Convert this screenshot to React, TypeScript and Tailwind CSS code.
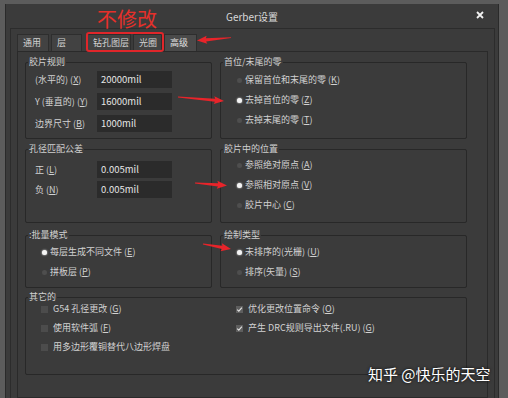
import React from "react";

type Opt = { text: string; key: string; tail?: string };

const Acc = ({ o }: { o: Opt }) => (
  <span className="whitespace-nowrap">
    {o.text} (<span className="underline underline-offset-1">{o.key}</span>){o.tail ?? ""}
  </span>
);

const InputRow = ({ label, value }: { label: Opt; value: string }) => (
  <div className="flex items-center h-[17px]">
    <div className="w-[62px]">
      <Acc o={label} />
    </div>
    <div className="w-[75px] h-[17px] bg-[#2b2b2b] pl-[4px] flex items-center text-[#e6e6e6] text-[9.5px]">
      {value}
    </div>
  </div>
);

const Radio = ({ o, on }: { o: Opt; on?: boolean }) => (
  <div className="flex items-center h-[20px] gap-[3px]">
    {on ? (
      <span className="w-[5px] h-[5px] rounded-full bg-[#f4f4f4] shadow-[0_0_2px_#ffffff]" />
    ) : (
      <span className="w-[5px] h-[5px] rounded-full bg-[#4e4e4e]" />
    )}
    <Acc o={o} />
  </div>
);

const Check = ({ label, on }: { label: React.ReactNode; on?: boolean }) => (
  <div className="flex items-center h-[12px] gap-[5px]">
    <span
      className={
        "w-[7px] h-[7px] flex items-center justify-center " +
        (on ? "bg-[#5e5e5e]" : "bg-[#4c4c4c]")
      }
    >
      {on && (
        <svg width="7" height="7" viewBox="0 0 7 7">
          <path d="M1.2 3.6 L2.8 5.2 L5.9 1.6" stroke="#e4e4e4" strokeWidth="1.1" fill="none" />
        </svg>
      )}
    </span>
    <span className="whitespace-nowrap">{label}</span>
  </div>
);

const Group = ({
  title,
  className,
  children,
}: {
  title: string;
  className: string;
  children: React.ReactNode;
}) => (
  <fieldset className={"border border-[#282828] rounded-[2px] " + className}>
    <legend className="ml-[2px] px-[1px] leading-[12px] text-[#d0d0d0]">{title}</legend>
    {children}
  </fieldset>
);

function arrow(x1: number, y1: number, x2: number, y2: number) {
  const dx = x2 - x1;
  const dy = y2 - y1;
  const len = Math.hypot(dx, dy);
  const ux = dx / len;
  const uy = dy / len;
  const nx = -uy;
  const ny = ux;
  const p = (a: number, b: number) => `${x1 + ux * a + nx * b},${y1 + uy * a + ny * b}`;
  const h = len - 9;
  return [p(0, -0.4), p(h, -1.6), p(h - 1, -4), p(len, 0), p(h - 1, 4), p(h, 1.6), p(0, 0.4)].join(" ");
}

const tabs = [
  { t: "通用", w: "w-[32px]", m: "" },
  { t: "层", w: "w-[31px]", m: "ml-[2px]" },
  { t: "钻孔图层", w: "w-[44px]", m: "ml-[5px]" },
  { t: "光圈", w: "w-[29px]", m: "ml-[2px]" },
  { t: "高级", w: "w-[33px]", m: "ml-[2px]", on: true },
];

export default function App() {
  return (
    <div className="relative w-[508px] h-[398px] overflow-hidden bg-[#5c5c5c] pt-[4px] pl-[5px] font-['Noto_Sans_CJK_SC','Noto_Sans',sans-serif] text-[9px] text-[#d2d2d2]">
      <div className="w-[494px] h-[394px] bg-[#3b3b3b] border-x border-[#2a2a2a] flex flex-col">
        {/* title bar */}
        <div className="relative h-[24px] flex items-center justify-center text-[10px] text-[#dadada]">
          Gerber设置
          <svg className="absolute right-[14px] top-[7px]" width="8" height="8" viewBox="0 0 8 8">
            <path d="M1 1 L7 7 M7 1 L1 7" stroke="#f2f2f2" strokeWidth="1.8" />
          </svg>
        </div>

        <div className="flex-1 ml-[4px] mr-[3px] border-t border-x border-[#2c2c2c] pt-[5px] px-[6px] flex flex-col">
          {/* tabs */}
          <div className="flex h-[17px]">
            {tabs.map((t) => (
              <div
                key={t.t}
                className={
                  "h-[17px] pl-[5px] flex items-center border border-b-0 border-[#2e2e2e] " +
                  t.w +
                  " " +
                  t.m +
                  (t.on ? " bg-[#4a4a4a] text-[#e2e2e2]" : " bg-[#424242]")
                }
              >
                {t.t}
              </div>
            ))}
          </div>

          {/* tab content */}
          <div className="flex-1 border border-[#2a2a2a] pl-[7px] pr-[20px] pt-[4px] flex flex-col">
            <div className="flex gap-[8px]">
              <Group title="胶片规则" className="w-[187px] h-[83px]">
                <div className="pl-[9px] pt-[3px] flex flex-col gap-[5px]">
                  <InputRow label={{ text: "(水平的)", key: "X" }} value="20000mil" />
                  <InputRow label={{ text: "Y (垂直的)", key: "Y" }} value="16000mil" />
                  <InputRow label={{ text: "边界尺寸", key: "B" }} value="1000mil" />
                </div>
              </Group>
              <Group title="首位/末尾的零" className="w-[247px] h-[83px]">
                <div className="pl-[16px] pt-[2px] flex flex-col">
                  <Radio o={{ text: "保留首位和末尾的零", key: "K" }} />
                  <Radio o={{ text: "去掉首位的零", key: "Z" }} on />
                  <Radio o={{ text: "去掉末尾的零", key: "T" }} />
                </div>
              </Group>
            </div>

            <div className="flex gap-[8px] mt-[4px]">
              <Group title="孔径匹配公差" className="w-[187px] h-[80px]">
                <div className="pl-[9px] pt-[6px] flex flex-col gap-[3px]">
                  <InputRow label={{ text: "正", key: "L" }} value="0.005mil" />
                  <InputRow label={{ text: "负", key: "N" }} value="0.005mil" />
                </div>
              </Group>
              <Group title="胶片中的位置" className="w-[247px] h-[80px]">
                <div className="pl-[16px] flex flex-col">
                  <Radio o={{ text: "参照绝对原点", key: "A" }} />
                  <Radio o={{ text: "参照相对原点", key: "V" }} on />
                  <Radio o={{ text: "胶片中心", key: "C" }} />
                </div>
              </Group>
            </div>

            <div className="flex gap-[8px] mt-[6px]">
              <Group title=":批量模式" className="w-[187px] h-[59px]">
                <div className="pl-[16px] pt-[1px] flex flex-col">
                  <Radio o={{ text: "每层生成不同文件", key: "E" }} on />
                  <Radio o={{ text: "拼板层", key: "P" }} />
                </div>
              </Group>
              <Group title="绘制类型" className="w-[247px] h-[59px]">
                <div className="pl-[16px] pt-[1px] flex flex-col">
                  <Radio o={{ text: "未排序的(光栅)", key: "U" }} on />
                  <Radio o={{ text: "排序(矢量)", key: "S" }} />
                </div>
              </Group>
            </div>

            <Group title="其它的" className="w-[442px] h-[84px] mt-[3px]">
              <div className="pl-[15px] grid grid-cols-[195px_1fr]">
                <div className="flex flex-col gap-[7px]">
                  <Check label={<Acc o={{ text: "G54 孔径更改", key: "G" }} />} />
                  <Check label={<Acc o={{ text: "使用软件弧", key: "F" }} />} />
                  <Check label="用多边形覆铜替代八边形焊盘" />
                </div>
                <div className="flex flex-col gap-[7px]">
                  <Check label={<Acc o={{ text: "优化更改位置命令", key: "O" }} />} on />
                  <Check label={<Acc o={{ text: "产生 DRC规则导出文件(.RU)", key: "G" }} />} on />
                </div>
              </div>
            </Group>
          </div>
        </div>
      </div>

      {/* annotations */}
      <div className="absolute left-[97px] top-[6px] text-[20px] leading-[26px] text-[#e5302a] tracking-[0px]">
        不修改
      </div>
      <div className="absolute left-[86px] top-[32px] w-[78px] h-[20px] border-2 border-[#e0262a] rounded-[3px]" />
      <svg className="absolute left-0 top-0 pointer-events-none" width="508" height="398">
        <g fill="#e8242a">
          <polygon points={arrow(231, 37.7, 197, 40.6)} />
          <polygon points={arrow(178, 97, 224, 101)} />
          <polygon points={arrow(195, 183, 227, 185.5)} />
          <polygon points={arrow(203, 244, 231, 249)} />
        </g>
      </svg>

      <div className="absolute left-[368px] top-[364px] text-[15px] leading-[20px] text-white [text-shadow:0_0_3px_#000]">
        知乎 @快乐的天空
      </div>
    </div>
  );
}
